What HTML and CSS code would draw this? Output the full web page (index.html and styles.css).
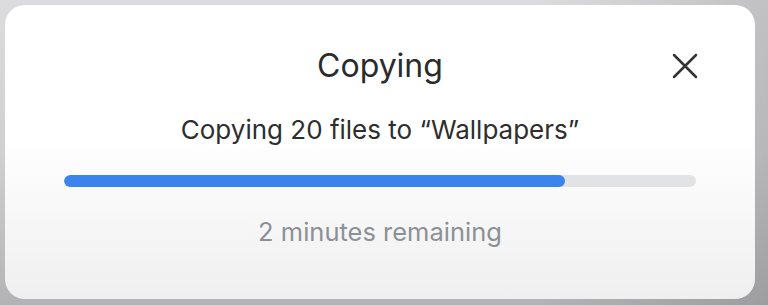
FILE: index.html
```html
<!DOCTYPE html>
<html lang="en">
<head>
<meta charset="utf-8">
<title>Copying</title>
<link rel="stylesheet" href="styles.css">
</head>
<body>
<div class="dialog">
  <div class="header">
    <span class="spacer"></span>
    <h1 class="title">Copying</h1>
    <button class="close" aria-label="Close">
      <svg width="26" height="26" viewBox="0 0 26 26"><path d="M2 2 L24 24 M24 2 L2 24" stroke="#333" stroke-width="2.5" stroke-linecap="round" fill="none"/></svg>
    </button>
  </div>
  <p class="message">Copying 20 files to “Wallpapers”</p>
  <div class="track"><div class="fill" style="width:79.3%"></div></div>
  <p class="remaining">2 minutes remaining</p>
</div>
</body>
</html>
```
FILE: styles.css
```css
html, body {
  margin: 0;
  height: 100%;
}
body {
  box-sizing: border-box;
  padding: 5px 13px 6px 5px;
  background:
    linear-gradient(to right, rgba(0,0,0,0) 0%, rgba(0,0,0,0) 70%, rgba(0,0,0,0.12) 100%),
    linear-gradient(to bottom, #dcdcde 0%, #d0d0d2 50%, #b3b3b5 100%);
  font-family: Inter, "Noto Sans", "Liberation Sans", sans-serif;
  display: flex;
}
.dialog {
  flex: 1;
  border-radius: 20px;
  background: linear-gradient(to bottom, #ffffff 0%, #ffffff 45%, #efefef 100%);
  display: flex;
  flex-direction: column;
  align-items: center;
  padding: 41px 59px 0 59px;
}
.header {
  width: 100%;
  display: grid;
  grid-template-columns: 1fr auto 1fr;
  align-items: center;
}
.title {
  margin: 0;
  font-size: 32px;
  font-weight: 400;
  color: #2b2b2b;
  line-height: 40px;
}
.close {
  justify-self: end;
  margin-right: -2px;
  background: none;
  border: 0;
  padding: 0;
  width: 26px;
  height: 26px;
  display: flex;
  align-items: center;
  justify-content: center;
}
.message {
  margin: 28px 0 0 0;
  font-size: 26px;
  line-height: 32px;
  color: #2e2e2e;
}
.track {
  margin-top: 29px;
  width: 100%;
  height: 12px;
  border-radius: 6px;
  background: #e2e3e5;
  overflow: hidden;
}
.fill {
  height: 100%;
  border-radius: 6px;
  background: #3b84ee;
}
.remaining {
  margin: 29px 0 0 0;
  font-size: 25.5px;
  line-height: 32px;
  color: #8c9098;
}
```
